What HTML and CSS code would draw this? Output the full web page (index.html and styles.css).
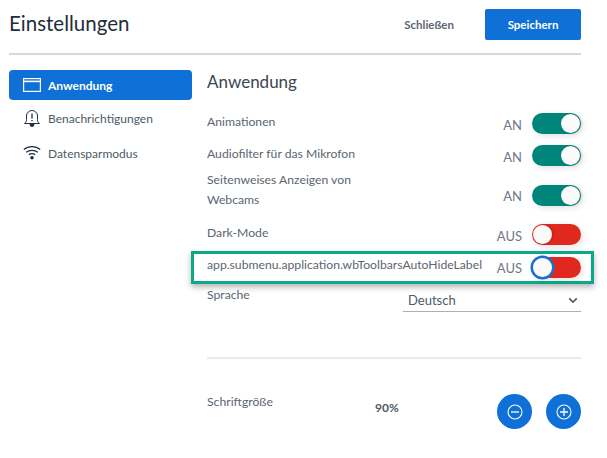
FILE: index.html
```html
<!DOCTYPE html>
<html lang="de">
<head>
<meta charset="UTF-8">
<meta name="viewport" content="width=device-width, initial-scale=1.0">
<title>Einstellungen</title>
<link rel="stylesheet" href="styles.css">
</head>
<body>
<div class="modal">
  <div class="header">
    <h1>Einstellungen</h1>
    <div class="header-actions">
      <button class="btn-close">Schließen</button>
      <button class="btn-save">Speichern</button>
    </div>
  </div>
  <div class="content">
    <div class="sidebar">
      <div class="nav-item active">
        <svg class="nav-icon" viewBox="0 0 18 14" fill="none" stroke="currentColor" stroke-width="1.2"><rect x="0.6" y="0.6" width="16.8" height="12.8"/><path d="M0.6 3.4h16.8" stroke-width="1.6"/></svg>
        <span>Anwendung</span>
      </div>
      <div class="nav-item">
        <svg class="nav-icon bell" viewBox="0 0 18 18" fill="none" stroke="currentColor" stroke-width="1"><path d="M1.500 14.500c1.400-1 2-2 2-4V7a5.500 5.500 0 0 1 11 0v3.500c0 2 .6 3 2 4z"/><path d="M7 15.500a2 2 0 0 0 4 0z" fill="currentColor"/><path d="M9 4.500v5M9 11v1.200" stroke-width="1.300"/></svg>
        <span>Benachrichtigungen</span>
      </div>
      <div class="nav-item">
        <svg class="nav-icon" viewBox="0 0 18 14" fill="none" stroke="currentColor" stroke-width="1.200"><path d="M0.800 3.500c4.500-3.800 11.900-3.800 16.400 0"/><path d="M3.200 6.300c3.200-2.600 8.400-2.600 11.600 0"/><path d="M5.800 8.800c1.900-1.400 4.500-1.400 6.400 0"/><circle cx="9" cy="11.800" r="1.800" fill="currentColor" stroke="none"/></svg>
        <span>Datensparmodus</span>
      </div>
    </div>
    <div class="main">
      <h2>Anwendung</h2>
      <div class="row">
        <div class="label">Animationen</div>
        <div class="state">AN</div>
        <div class="toggle on"><span class="knob"></span></div>
      </div>
      <div class="row">
        <div class="label">Audiofilter für das Mikrofon</div>
        <div class="state">AN</div>
        <div class="toggle on"><span class="knob"></span></div>
      </div>
      <div class="row tall">
        <div class="label narrow">Seitenweises Anzeigen von Webcams</div>
        <div class="state">AN</div>
        <div class="toggle on"><span class="knob"></span></div>
      </div>
      <div class="row">
        <div class="label">Dark-Mode</div>
        <div class="state">AUS</div>
        <div class="toggle off"><span class="knob"></span></div>
      </div>
      <div class="row highlight">
        <div class="label">app.submenu.application.wbToolbarsAutoHideLabel</div>
        <div class="state">AUS</div>
        <div class="toggle off focus"><span class="knob"></span></div>
      </div>
      <div class="row lang">
        <div class="label">Sprache</div>
        <div class="select">
          <span>Deutsch</span>
          <svg class="chevron" viewBox="0 0 12 8" fill="none" stroke="currentColor" stroke-width="2"><path d="M1.500 1.500 6 6l4.500-4.500"/></svg>
        </div>
      </div>
      <div class="divider"></div>
      <div class="row font-size">
        <div class="label">Schriftgröße</div>
        <div class="percent">90%</div>
        <button class="round-btn"><svg viewBox="0 0 16 16" fill="none" stroke="currentColor" stroke-width="1.100"><circle cx="8" cy="8" r="7"/><path d="M4 8h8" stroke-width="1.300"/></svg></button>
        <button class="round-btn"><svg viewBox="0 0 16 16" fill="none" stroke="currentColor" stroke-width="1.100"><circle cx="8" cy="8" r="7"/><path d="M4 8h8M8 4v8" stroke-width="1.300"/></svg></button>
      </div>
    </div>
  </div>
</div>
</body>
</html>
```
FILE: styles.css
```css
body {
  margin: 0;
  background-color: #fff;
  font-family: "Lato", "Noto Sans", sans-serif;
  color: #4e5a66;
  overflow: hidden;
}
.modal {
  width: 572px;
  margin-left: 9px;
}
.header {
  display: flex;
  justify-content: space-between;
  align-items: center;
  height: 53px;
  border-bottom: 2px solid #d5d9de;
}
h1 {
  margin: 0 0 8px;
  font-size: 20.5px;
  font-weight: 400;
  color: #222f3a;
}
.header-actions {
  display: flex;
  align-items: center;
  gap: 31px;
  margin-bottom: 4px;
  height: 31px;
}
button {
  font-family: inherit;
  border: none;
  cursor: pointer;
}
.btn-close {
  background: none;
  padding: 0;
  font-size: 11.5px;
  font-weight: 700;
  color: #5b6670;
}
.btn-save {
  width: 96px;
  height: 31px;
  background-color: #0f70d7;
  border-radius: 2px;
  color: #fff;
  font-size: 11.5px;
  font-weight: 700;
}
.content {
  display: flex;
  margin-top: 15px;
}
.sidebar {
  width: 183px;
  margin-right: 15px;
}
.nav-item {
  display: flex;
  align-items: center;
  height: 30px;
  padding-left: 14px;
  margin-bottom: 5px;
  font-size: 12px;
  color: #4e5a66;
  border-radius: 4px;
}
.nav-item.active {
  margin-bottom: 3px;
  background-color: #0f70d7;
  color: #fff;
  font-weight: 700;
}
.nav-icon {
  width: 18px;
  height: 14px;
  margin-right: 7px;
  color: #222f3a;
}
.nav-icon.bell {
  height: 18px;
}
.active .nav-icon {
  color: #fff;
}
.main {
  width: 374px;
}
h2 {
  margin: 0 0 14px;
  height: 29px;
  line-height: 23px;
  font-size: 17px;
  font-weight: 400;
  color: #3a4651;
}
.row {
  display: flex;
  align-items: flex-start;
  height: 32px;
  font-size: 12.2px;
}
.row.tall {
  height: 46px;
  margin-bottom: 1px;
}
.label {
  flex: 1;
  line-height: 17px;
  color: #5b6670;
}
.label.narrow {
  flex: none;
  width: 180px;
  margin: -7px auto 0 0;
  line-height: 20px;
}
.state {
  margin: 4px 10px 0 0;
  font-size: 13px;
  color: #6d7883;
}
.toggle {
  position: relative;
  width: 49px;
  height: 21px;
  border-radius: 11px;
  box-shadow: 2px 2px 6px rgba(0, 0, 0, 0.12);
}
.row.tall .toggle {
  margin-top: 8px;
}
.row.tall .state {
  margin-top: 11px;
}
.toggle.on {
  background-color: #00857a;
}
.toggle.off {
  background-color: #e0281f;
}
.knob {
  position: absolute;
  top: 1px;
  width: 19px;
  height: 19px;
  border-radius: 50%;
  background-color: #fafafa;
  box-shadow: 1px 0 3px rgba(0, 0, 0, 0.2);
}
.on .knob {
  right: 1px;
}
.off .knob {
  left: 1px;
}
.focus .knob {
  width: 15px;
  height: 15px;
  border: 2px solid #fff;
  box-shadow: 0 0 0 2.5px #1a6fd0;
}
.row.highlight {
  height: 27px;
  margin: -5px -13px 0 -16px;
  padding: 0 10px 0 13px;
  border: 3px solid #0aa98a;
  box-shadow: 0 3px 6px rgba(0, 0, 0, 0.3);
  align-items: center;
}
.row.highlight .label {
  padding-bottom: 7px;
}
.row.highlight .state {
  margin-top: 1px;
}
.row.lang {
  height: 71px;
  margin-top: 2px;
}
.row.lang .label {
  flex: none;
  width: 196px;
}
.select {
  display: flex;
  justify-content: space-between;
  align-items: center;
  flex: 1;
  height: 22px;
  padding: 2px 3px 0 5px;
  margin-top: 1px;
  border-bottom: 1px solid #a9b0b8;
  font-size: 13px;
  color: #4e5a66;
}
.chevron {
  width: 10px;
  height: 7px;
  color: #4e5a66;
}
.divider {
  height: 2px;
  background-color: #e7ebef;
}
.row.font-size {
  height: 35px;
  margin-top: 35px;
  align-items: center;
}
.row.font-size .label {
  flex: none;
  width: 168px;
  padding: 0 0 20px;
}
.percent {
  flex: 1;
  font-size: 12px;
  font-weight: 700;
  color: #4e5a66;
  padding-bottom: 8px;
}
.round-btn {
  display: flex;
  align-items: center;
  justify-content: center;
  width: 35px;
  height: 35px;
  padding: 0;
  margin-left: 14px;
  border-radius: 50%;
  background-color: #0f70d7;
  color: #fff;
}
.round-btn svg {
  width: 16px;
  height: 16px;
}
```
